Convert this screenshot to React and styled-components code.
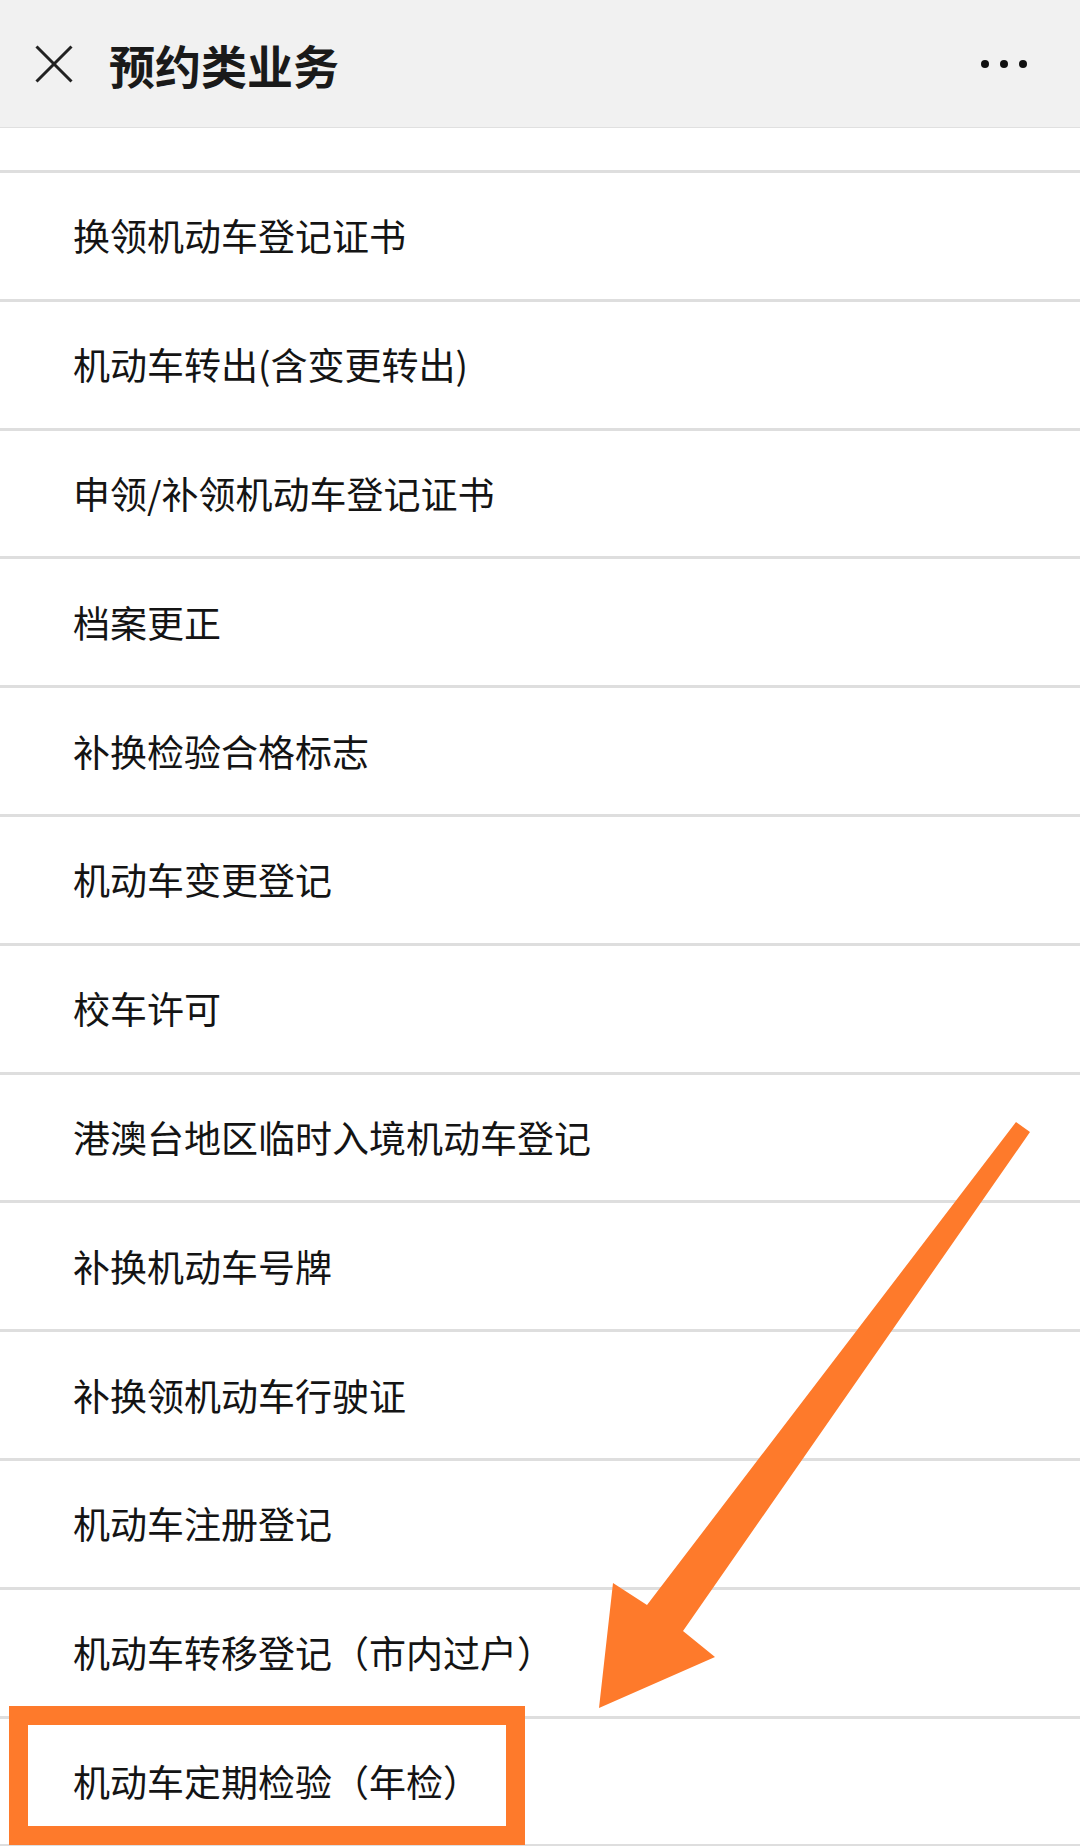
import React from "react";
import styled, { createGlobalStyle } from "styled-components";

const GlobalStyle = createGlobalStyle`
  html, body {
    margin: 0;
    padding: 0;
    background: #ffffff;
  }
  body {
    font-family: "Noto Sans CJK SC", "Noto Sans", sans-serif;
  }
`;

const ORANGE = "#fe7a2b";

const Page = styled.div`
  position: relative;
  width: 1080px;
  height: 1846px;
  overflow: hidden;
  background: #ffffff;
`;

const Header = styled.header`
  display: flex;
  align-items: center;
  height: 128px;
  box-sizing: border-box;
  padding: 0 53px 0 35px;
  background: #f1f1f1;
  border-bottom: 1px solid #e0e0e0;
`;

const CloseButton = styled.svg`
  width: 38px;
  height: 38px;
  flex: none;
  margin-top: 1px;
`;

const Title = styled.h1`
  margin: 0 0 0 36px;
  font-size: 46px;
  line-height: 1;
  font-weight: 700;
  color: #1a1a1a;
`;

const More = styled.div`
  margin-left: auto;
  display: flex;
  gap: 11px;
  align-items: center;
`;

const Dot = styled.span`
  width: 8px;
  height: 8px;
  border-radius: 50%;
  background: #111;
`;

const List = styled.ul`
  list-style: none;
  margin: 0;
  padding: 0;
`;

const Row = styled.li`
  display: flex;
  align-items: center;
  box-sizing: border-box;
  height: ${(p) => p.$h}px;
  padding-left: 73px;
  border-bottom: 3px solid #dedede;
  font-size: 37px;
  line-height: 1;
  color: #141414;
`;

const Highlight = styled.div`
  position: absolute;
  left: 9px;
  top: 1706px;
  width: 516px;
  height: 139px;
  box-sizing: border-box;
  border: 19px solid ${ORANGE};
  pointer-events: none;
`;

const Arrow = styled.svg`
  position: absolute;
  left: 590px;
  top: 1110px;
  width: 450px;
  height: 610px;
  pointer-events: none;
`;

const items = [
  "换领机动车登记证书",
  "机动车转出(含变更转出)",
  "申领/补领机动车登记证书",
  "档案更正",
  "补换检验合格标志",
  "机动车变更登记",
  "校车许可",
  "港澳台地区临时入境机动车登记",
  "补换机动车号牌",
  "补换领机动车行驶证",
  "机动车注册登记",
  "机动车转移登记（市内过户）",
  "机动车定期检验（年检）",
];

export default function App() {
  return (
    <>
      <GlobalStyle />
      <Page>
        <Header>
          <CloseButton viewBox="0 0 38 38">
            <line x1="1.5" y1="1.5" x2="36.5" y2="36.5" stroke="#222" strokeWidth="3" />
            <line x1="36.5" y1="1.5" x2="1.5" y2="36.5" stroke="#222" strokeWidth="3" />
          </CloseButton>
          <Title>预约类业务</Title>
          <More>
            <Dot />
            <Dot />
            <Dot />
          </More>
        </Header>
        <List>
          <Row $h={45} aria-hidden="true" />
          {items.map((t) => (
            <Row key={t} $h={128.8}>
              {t}
            </Row>
          ))}
        </List>
        <Highlight />
        <Arrow viewBox="0 0 450 610">
          <polygon
            fill={ORANGE}
            points="426,12 440,22 93,521 125,547 9,598 23,473 57,495"
          />
        </Arrow>
      </Page>
    </>
  );
}
